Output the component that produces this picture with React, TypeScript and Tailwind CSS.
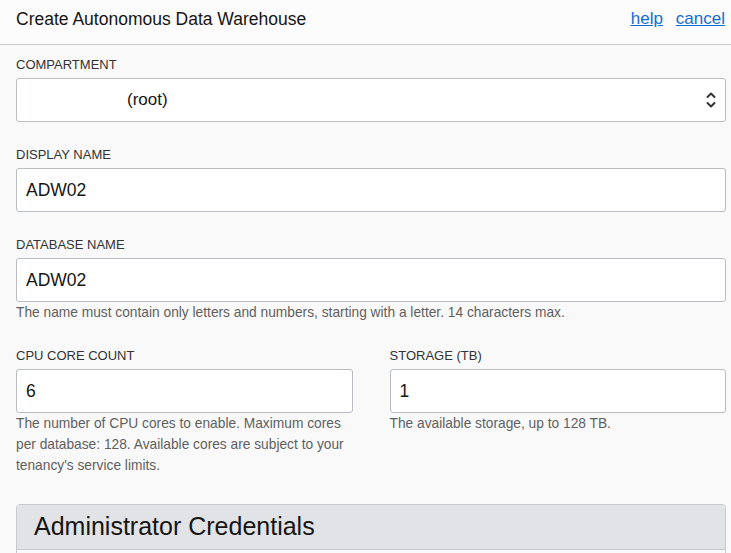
import React from 'react';

const font = { fontFamily: '"Liberation Sans", Arial, sans-serif' };

function Label({ children }: { children: React.ReactNode }) {
  return <div className="text-[13px] leading-[16px] text-[#333] uppercase mb-[5px]">{children}</div>;
}

function TextBox({ value }: { value: string }) {
  return (
    <div className="h-[44px] bg-white border border-[#b9bcc0] rounded-[3px] flex items-center pl-[9px] text-[17.5px] text-[#161513]">
      {value}
    </div>
  );
}

function Help({ children }: { children: React.ReactNode }) {
  return <p className="text-[13.75px] leading-[21px] text-[#5f5f5f]">{children}</p>;
}

export default function App() {
  return (
    <div style={font} className="w-[731px] h-[553px] overflow-hidden bg-[#f9f9fa]">
      {/* header */}
      <div className="h-[45px] bg-[#fcfcfc] border-b border-[#c9cacc] flex justify-between pl-[16px] pr-[6px] pt-[9px]">
        <h1 className="text-[17.5px] leading-[20px] text-[#161513]">Create Autonomous Data Warehouse</h1>
        <div className="flex gap-[13px] text-[17px] leading-[20px] text-[#0f6fd0] underline">
          <a href="#">help</a>
          <a href="#">cancel</a>
        </div>
      </div>

      <div className="pl-[16px] pr-[5px] pt-[12px]">
        <Label>Compartment</Label>
        <div className="h-[44px] bg-white border border-[#b9bcc0] rounded-[3px] flex items-center justify-between pl-[110px] pr-[8px] text-[17px] text-[#161513]">
          <span>(root)</span>
          <svg width="12" height="22" viewBox="0 0 12 22" fill="none" stroke="#333" strokeWidth="2" strokeLinecap="round" strokeLinejoin="round">
            <path d="M2.5 8 L6 4.5 L9.5 8" />
            <path d="M2.5 14 L6 17.5 L9.5 14" />
          </svg>
        </div>

        <div className="mt-[25px]">
          <Label>Display Name</Label>
          <TextBox value="ADW02" />
        </div>

        <div className="mt-[25px]">
          <Label>Database Name</Label>
          <TextBox value="ADW02" />
          <Help>The name must contain only letters and numbers, starting with a letter. 14 characters max.</Help>
        </div>

        <div className="mt-[25px] grid grid-cols-2 gap-[37px]">
          <div>
            <Label>CPU Core Count</Label>
            <TextBox value="6" />
            <Help>
              The number of CPU cores to enable. Maximum cores per database: 128. Available cores are subject to your
              tenancy's service limits.
            </Help>
          </div>
          <div>
            <Label>Storage (TB)</Label>
            <TextBox value="1" />
            <Help>The available storage, up to 128 TB.</Help>
          </div>
        </div>

        <div className="mt-[28px] border border-[#c6c9cd] rounded-t-[4px] bg-[#f9f9fa]">
          <div className="h-[45px] bg-[#e1e3e6] border-b border-[#c6c9cd] flex items-center pl-[17px] rounded-t-[4px]">
            <h2 className="text-[25px] text-[#161513]">Administrator Credentials</h2>
          </div>
          <div className="h-[40px]" />
        </div>
      </div>
    </div>
  );
}
